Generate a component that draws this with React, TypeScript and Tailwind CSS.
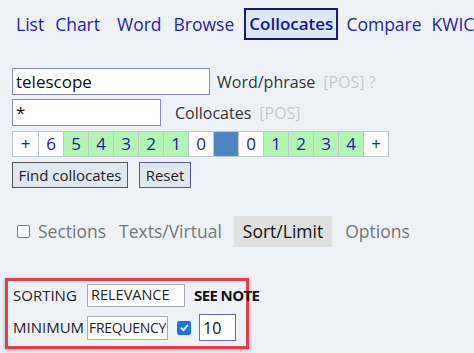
import React from "react";

const cells: { t: string; c: "w" | "g" | "b" }[] = [
  { t: "+", c: "w" },
  { t: "6", c: "w" },
  { t: "5", c: "g" },
  { t: "4", c: "g" },
  { t: "3", c: "g" },
  { t: "2", c: "g" },
  { t: "1", c: "g" },
  { t: "0", c: "w" },
  { t: "", c: "b" },
  { t: "0", c: "w" },
  { t: "1", c: "g" },
  { t: "2", c: "g" },
  { t: "3", c: "g" },
  { t: "4", c: "g" },
  { t: "+", c: "w" },
];

export default function App() {
  return (
    <div
      className="w-[474px] h-[353px] overflow-hidden bg-[#eef2f7] text-[#222] relative"
      style={{ fontFamily: '"Open Sans", "Noto Sans", sans-serif' }}
    >
      {/* nav */}
      <div className="flex items-center h-[32px] mt-[8px] text-[17.5px] text-[#2222b0] whitespace-nowrap">
        <span className="ml-[16px] shrink-0">List</span>
        <span className="ml-[11px] shrink-0">Chart</span>
        <span className="ml-[17px] shrink-0">Word</span>
        <span className="ml-[12px] shrink-0">Browse</span>
        <span className="ml-[10px] shrink-0 h-[32px] px-[3px] flex items-center border-2 border-[#1b1b6e] bg-[#dfe8f5] font-semibold text-[17px] text-[#1414a8]">
          Collocates
        </span>
        <span className="ml-[8px] shrink-0">Compare</span>
        <span className="ml-[10px] shrink-0">KWIC</span>
      </div>

      {/* inputs */}
      <div className="mt-[28px] ml-[12px] flex items-center h-[27px]">
        <div className="w-[198px] h-[27px] bg-white border border-[#8a86c8] flex items-center px-[3px] text-[17px] text-[#111]">
          telescope
        </div>
        <span className="ml-[7px] text-[16px] text-[#333]">Word/phrase</span>
        <span className="ml-[8px] text-[16px] text-[#c4c8cf]">[POS] ?</span>
      </div>
      <div className="mt-[4px] ml-[12px] flex items-center h-[27px]">
        <div className="w-[149px] h-[27px] bg-white border border-[#8a86c8] flex items-center px-[3px] text-[17px] text-[#111]">
          *
        </div>
        <span className="ml-[14px] text-[16px] text-[#333]">Collocates</span>
        <span className="ml-[8px] text-[16px] text-[#c4c8cf]">[POS]</span>
      </div>

      {/* span row */}
      <div className="mt-[5px] ml-[12px] flex h-[26px] border border-[#b8c8cc] w-max">
        {cells.map((c, i) => (
          <div
            key={i}
            className={
              "w-[25px] h-full flex items-center justify-center text-[17px] text-[#1c1ca8] " +
              (i > 0 ? "border-l border-[#b8c8cc] " : "") +
              (c.c === "g" ? "bg-[#b2f5b2]" : c.c === "b" ? "bg-[#4f83c3]" : "bg-white")
            }
          >
            {c.t}
          </div>
        ))}
      </div>

      {/* buttons */}
      <div className="mt-[5px] ml-[12px] flex gap-[11px]">
        <div className="h-[26px] w-[116px] border border-[#555] bg-[#dfe7f0] flex items-center justify-center text-[15px] text-[#222]">
          Find collocates
        </div>
        <div className="h-[26px] w-[52px] border border-[#5a56a8] bg-[#dfe7f0] flex items-center justify-center text-[15px] text-[#222]">
          Reset
        </div>
      </div>

      {/* tabs */}
      <div className="mt-[28px] flex items-center h-[31px] text-[17.5px] text-[#777] whitespace-nowrap">
        <div className="ml-[17px] shrink-0 w-[13px] h-[13px] border border-[#777] rounded-[2px] bg-white" />
        <span className="ml-[8px] shrink-0">Sections</span>
        <span className="ml-[13px] shrink-0">Texts/Virtual</span>
        <span className="ml-[12px] shrink-0 h-[31px] px-[9px] flex items-center bg-[#e0e0e0] text-[#111]">Sort/Limit</span>
        <span className="ml-[13px] shrink-0">Options</span>
      </div>

      {/* sort/limit */}
      <div className="mt-[31px] ml-[5px] w-[244px] h-[71px] border-[3px] border-[#e0404a] shadow-[0_1px_4px_rgba(0,0,0,0.35)] text-[15px] text-[#222]">
        <div className="flex items-center mt-[2px] h-[24px] whitespace-nowrap">
          <span className="ml-[5px] w-[74px] shrink-0">SORTING</span>
          <div className="shrink-0 w-[98px] h-[23px] bg-white border border-[#aaa] flex items-center px-[3px] text-[14.5px]">
            RELEVANCE
          </div>
          <span className="ml-[9px] shrink-0 font-bold text-[15px] text-[#111] tracking-[-0.6px]">SEE NOTE</span>
        </div>
        <div className="flex items-center mt-[7px] h-[27px] whitespace-nowrap">
          <span className="ml-[5px] w-[74px] shrink-0">MINIMUM</span>
          <div className="shrink-0 w-[81px] h-[24px] bg-white border border-[#aaa] flex items-center px-[1px] text-[14px] tracking-[-0.3px]">
            FREQUENCY
          </div>
          <div className="ml-[9px] shrink-0 w-[14px] h-[14px] rounded-[2px] bg-[#1a73e8] flex items-center justify-center">
            <svg width="11" height="11" viewBox="0 0 12 12">
              <path d="M2.2 6.3 L4.8 8.8 L9.8 3.2" stroke="white" strokeWidth="2" fill="none" />
            </svg>
          </div>
          <div className="ml-[8px] shrink-0 w-[37px] h-[27px] bg-white border border-[#6a66b8] flex items-center px-[3px] text-[16px] text-[#111]">
            10
          </div>
        </div>
      </div>
    </div>
  );
}
